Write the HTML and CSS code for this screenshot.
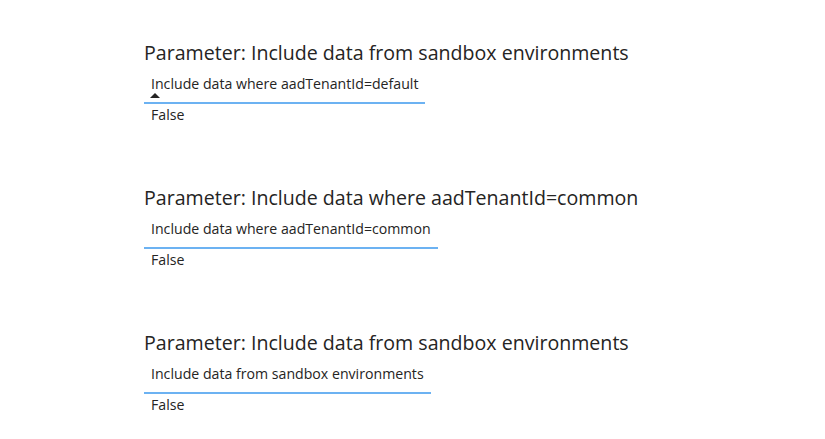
FILE: index.html
```html
<!DOCTYPE html>
<html lang="en">
<head>
  <meta charset="UTF-8">
  <title>Parameters</title>
  <link rel="stylesheet" href="styles.css">
</head>
<body>
  <div class="page">
    <div class="param">
      <h2>Parameter: Include data from sandbox environments</h2>
      <table class="grid">
        <thead>
          <tr><th class="sorted">Include data where aadTenantId=default<span class="sort-arrow"></span></th></tr>
        </thead>
        <tbody>
          <tr><td>False</td></tr>
        </tbody>
      </table>
    </div>

    <div class="param">
      <h2>Parameter: Include data where aadTenantId=common</h2>
      <table class="grid">
        <thead>
          <tr><th>Include data where aadTenantId=common</th></tr>
        </thead>
        <tbody>
          <tr><td>False</td></tr>
        </tbody>
      </table>
    </div>

    <div class="param">
      <h2>Parameter: Include data from sandbox environments</h2>
      <table class="grid">
        <thead>
          <tr><th>Include data from sandbox environments</th></tr>
        </thead>
        <tbody>
          <tr><td>False</td></tr>
        </tbody>
      </table>
    </div>
  </div>
</body>
</html>
```

FILE: styles.css
```css
body {
  margin: 0;
  background: #fff;
  font-family: "Open Sans", "Noto Sans", sans-serif;
  color: #252423;
}
.page {
  display: flex;
  flex-direction: column;
  gap: 59px;
  padding: 40px 0 0 144px;
}
h2 {
  margin: 0 0 4px 0;
  font-size: 19.6px;
  font-weight: 400;
  line-height: 26px;
}
.grid {
  border-collapse: collapse;
}
.grid th {
  position: relative;
  text-align: left;
  font-weight: 400;
  font-size: 14.15px;
  line-height: 20px;
  padding: 4px 7px 8px 7px;
  border-bottom: 2px solid #6cb2f2;
  white-space: nowrap;
}
.grid td {
  font-size: 14.15px;
  line-height: 20px;
  padding: 1px 7px;
}
.sort-arrow {
  position: absolute;
  left: 6px;
  bottom: 4px;
  border-left: 5px solid transparent;
  border-right: 5px solid transparent;
  border-bottom: 5px solid #252423;
}
```
